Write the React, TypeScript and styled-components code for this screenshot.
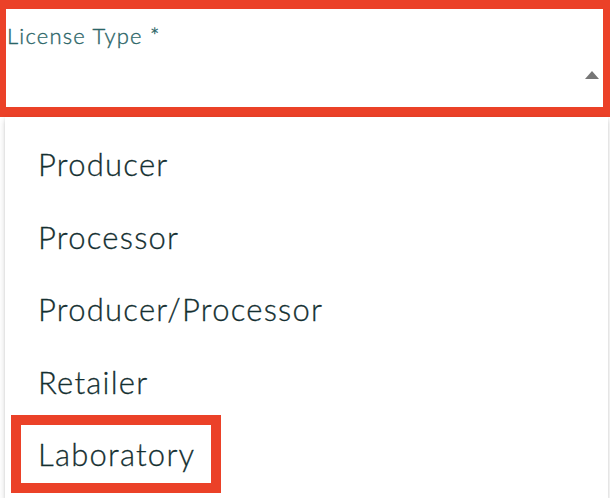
import React from 'react'
import styled, { createGlobalStyle } from 'styled-components'

const red = '#eb4128'
const teal = '#2b6567'
const ink = '#142f31'

const GlobalStyle = createGlobalStyle`
  html, body {
    margin: 0;
    padding: 0;
    background: #ffffff;
    font-family: Lato, "Liberation Sans", sans-serif;
  }
`

const Page = styled.div`
  width: 610px;
  height: 498px;
  overflow: hidden;
  display: flex;
  flex-direction: column;
`

const Field = styled.div`
  box-sizing: border-box;
  height: 117px;
  border-style: solid;
  border-color: ${red};
  border-width: 9px 7px 10px 6px;
  background: #ffffff;
  display: flex;
  flex-direction: column;
  padding: 14px 4px 0 1px;
`

const Label = styled.label`
  font-size: 22px;
  font-weight: 300;
  letter-spacing: 1.2px;
  line-height: 1.2;
  color: ${teal};
  -webkit-text-stroke: 0.35px ${teal};
`

const ArrowRow = styled.div`
  display: flex;
  justify-content: flex-end;
  margin-top: 22px;
`

const Menu = styled.ul`
  list-style: none;
  margin: 0 2px 0 5px;
  padding: 11px 0 0;
  flex: 1;
  background: #ffffff;
  box-shadow: 0 3px 6px rgba(0, 0, 0, 0.18), 0 1px 2px rgba(0, 0, 0, 0.08);
`

const Item = styled.li`
  height: 72.5px;
  display: flex;
  align-items: center;
  padding: 0 6px;
`

const ItemText = styled.span<{ $marked: boolean }>`
  display: inline-block;
  height: 58px;
  line-height: 58px;
  padding: 0 16px 0 17px;
  margin-left: 10px;
  font-size: 31px;
  font-weight: 300;
  letter-spacing: 1.25px;
  color: ${ink};
  -webkit-text-stroke: 0.3px ${ink};
  outline: 10px solid ${({ $marked }) => ($marked ? red : 'transparent')};
`

const options = ['Producer', 'Processor', 'Producer/Processor', 'Retailer', 'Laboratory']

const App: React.FunctionComponent = () => {
  return (
    <Page>
      <GlobalStyle />
      <Field>
        <Label>License Type *</Label>
        <ArrowRow>
          <svg width="14" height="8" viewBox="0 0 14 8">
            <path d="M7 0 L14 8 L0 8 Z" fill="#767676" />
          </svg>
        </ArrowRow>
      </Field>
      <Menu>
        {options.map((option) => (
          <Item key={option}>
            <ItemText $marked={option === 'Laboratory'}>{option}</ItemText>
          </Item>
        ))}
      </Menu>
    </Page>
  )
}

export default App
